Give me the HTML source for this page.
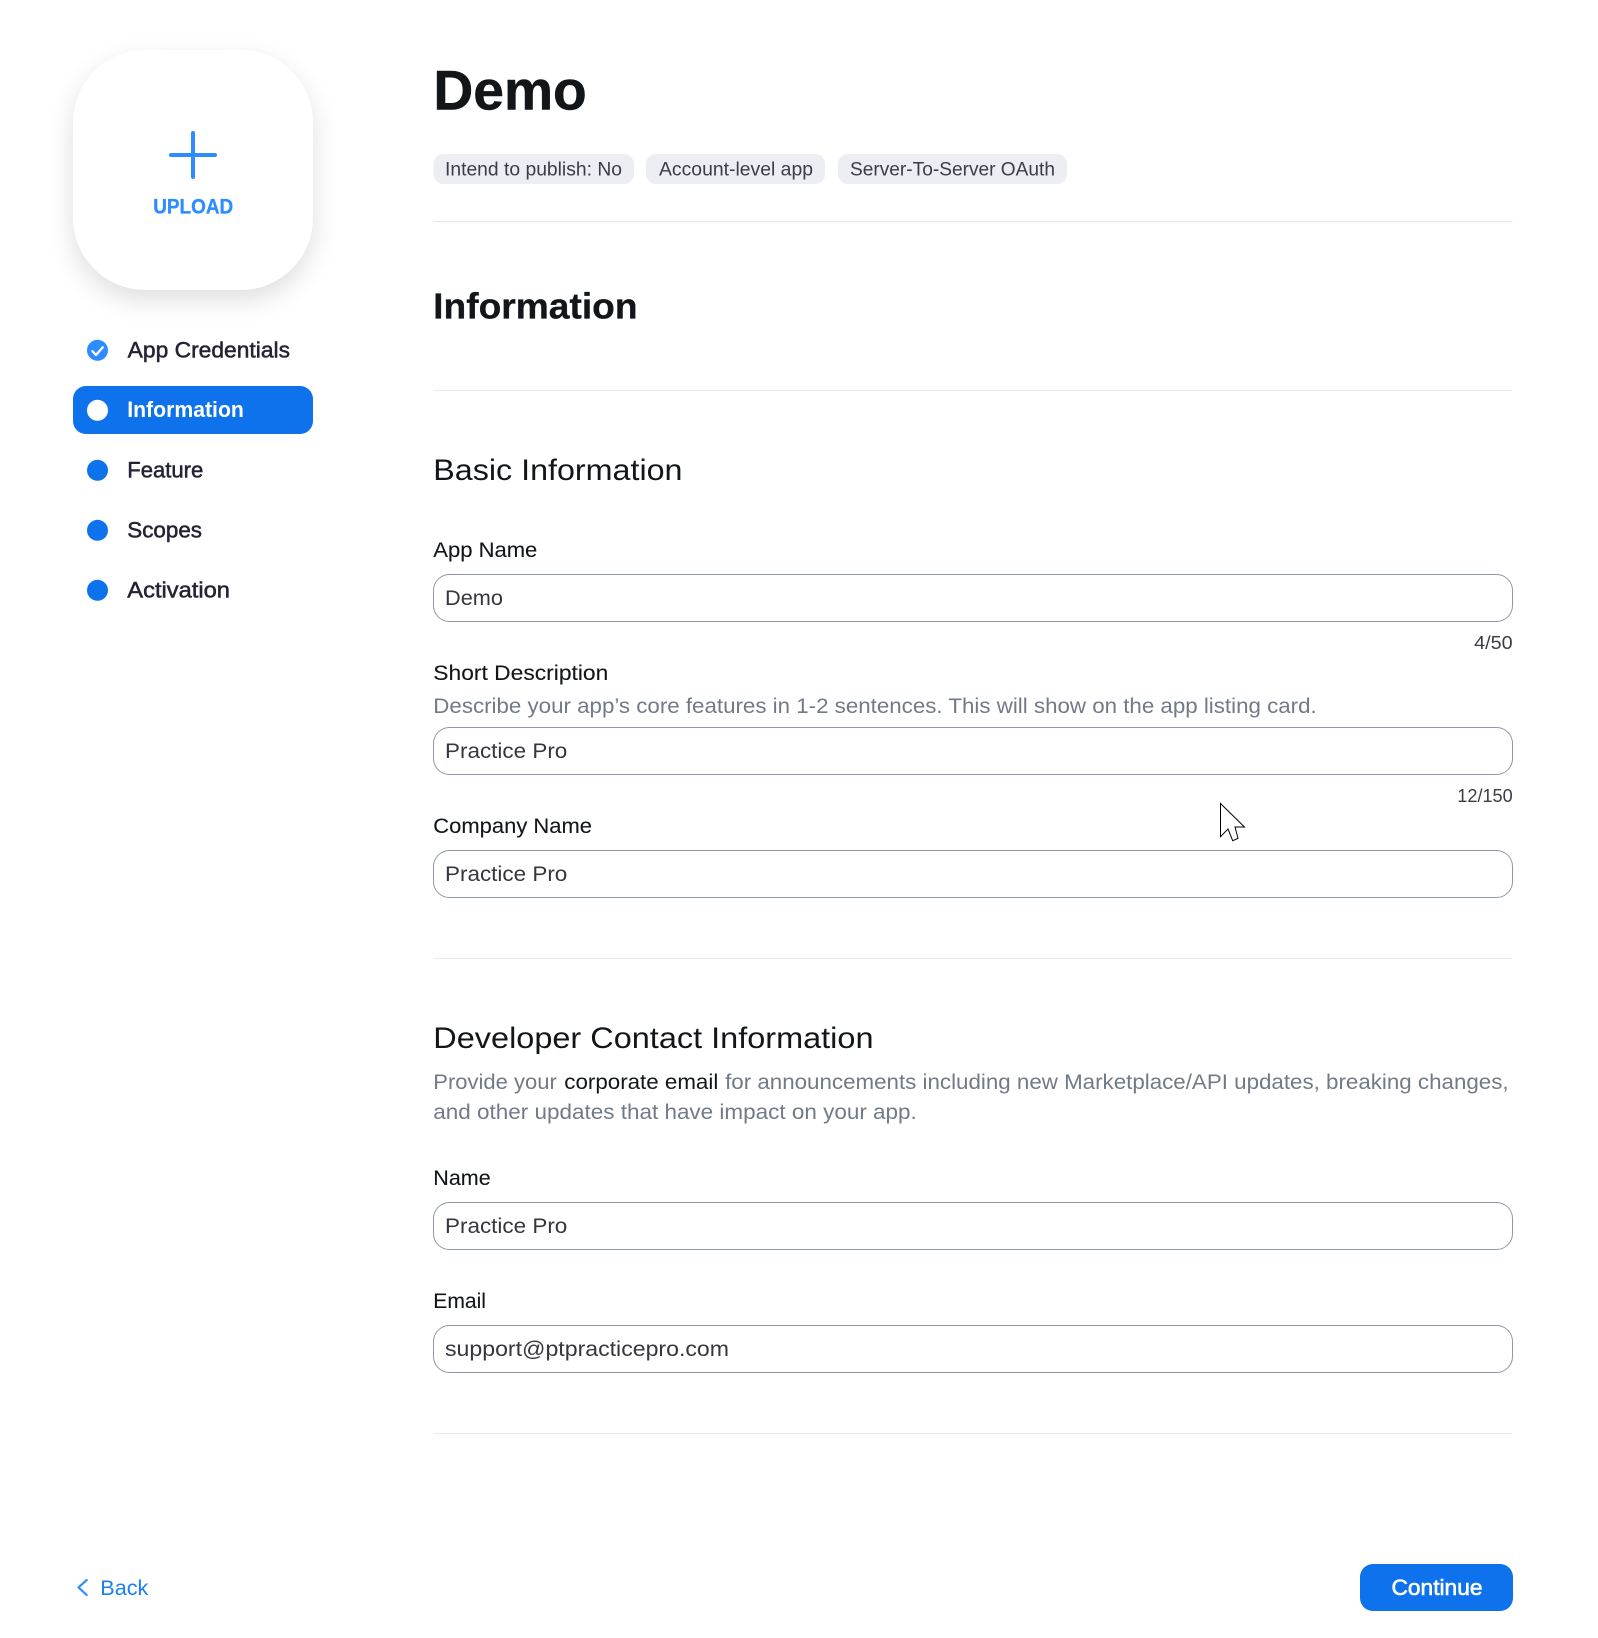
<!DOCTYPE html>
<html lang="en">
<head>
<meta charset="utf-8">
<title>Demo</title>
<style>
html,body{margin:0;padding:0;background:#fff;width:1598px;height:1638px;overflow:hidden}
.card{position:absolute;left:73px;top:50px;width:240px;height:240px;border-radius:72px;background:#fff;box-shadow:0 10px 26px rgba(0,0,0,.13)}
svg{position:absolute;left:0;top:0}
text{font-family:"Liberation Sans",Arial,sans-serif;white-space:pre}
.nav{font-size:22px;fill:#232333;stroke:#232333;stroke-width:.5px}
.lab{font-size:21.5px;fill:#131619;stroke:#131619;stroke-width:.1px}
.val{font-size:21.5px;fill:#36363f}
.sub{font-size:21.5px;fill:#727a88}
.bad{font-size:19px;fill:#3c3c46}
.cnt{font-size:18.5px;fill:#3c3c46}
.h3{font-size:30px;fill:#131619}
.inp{fill:#fff;stroke:#8f98a6;stroke-width:1}
.div{fill:#e9e9ec}
</style>
</head>
<body>
<div class="card"></div>
<svg width="1598" height="1638" viewBox="0 0 1598 1638" xmlns="http://www.w3.org/2000/svg">
  <!-- upload -->
  <path d="M193 133V177M171 155H215" stroke="#2d8cff" stroke-width="4" stroke-linecap="round" fill="none"/>
  <text x="153.2" y="213.7" font-size="21" font-weight="700" fill="#2d8cff" stroke="#2d8cff" stroke-width=".3" textLength="80" lengthAdjust="spacingAndGlyphs">UPLOAD</text>

  <!-- nav -->
  <circle cx="97.5" cy="350.3" r="10.5" fill="#2d8cff"/>
  <path d="M92.4 351.2l3.6 3.8 6.8-7.8" stroke="#fff" stroke-width="2.3" fill="none" stroke-linecap="round" stroke-linejoin="round"/>
  <text class="nav" x="127.7" y="357.4" textLength="162.3" lengthAdjust="spacingAndGlyphs">App Credentials</text>

  <rect x="73" y="386" width="240" height="48" rx="13" fill="#0e72ed"/>
  <circle cx="97.5" cy="410.3" r="10.5" fill="#fff"/>
  <text x="127.2" y="417.2" font-size="22" font-weight="700" fill="#fff" textLength="116.7" lengthAdjust="spacingAndGlyphs">Information</text>

  <circle cx="97.5" cy="470.3" r="10.5" fill="#0e72ed"/>
  <text class="nav" x="127.3" y="477.4" textLength="76" lengthAdjust="spacingAndGlyphs">Feature</text>
  <circle cx="97.5" cy="530.3" r="10.5" fill="#0e72ed"/>
  <text class="nav" x="127.3" y="537.4" textLength="74.7" lengthAdjust="spacingAndGlyphs">Scopes</text>
  <circle cx="97.5" cy="590.3" r="10.5" fill="#0e72ed"/>
  <text class="nav" x="127.3" y="597.4" textLength="102.7" lengthAdjust="spacingAndGlyphs">Activation</text>

  <!-- header -->
  <text x="433.4" y="109.6" font-size="56" font-weight="700" fill="#131619" stroke="#131619" stroke-width=".5" textLength="153.4" lengthAdjust="spacingAndGlyphs">Demo</text>

  <rect x="433.5" y="154" width="200.5" height="30" rx="10" fill="#ededf4"/>
  <text class="bad" x="445" y="175.3" textLength="177" lengthAdjust="spacingAndGlyphs">Intend to publish: No</text>
  <rect x="646" y="154" width="179" height="30" rx="10" fill="#ededf4"/>
  <text class="bad" x="659" y="175.3" textLength="154" lengthAdjust="spacingAndGlyphs">Account-level app</text>
  <rect x="838" y="154" width="229" height="30" rx="10" fill="#ededf4"/>
  <text class="bad" x="850" y="175.3" textLength="205" lengthAdjust="spacingAndGlyphs">Server-To-Server OAuth</text>

  <rect class="div" x="433.5" y="221" width="1079" height="1.2"/>

  <text x="433.2" y="318.3" font-size="36" font-weight="700" fill="#131619" stroke="#131619" stroke-width=".3" textLength="204.4" lengthAdjust="spacingAndGlyphs">Information</text>
  <rect class="div" x="433.5" y="390" width="1079" height="1"/>

  <!-- basic info -->
  <text class="h3" x="433.3" y="480" textLength="249.2" lengthAdjust="spacingAndGlyphs">Basic Information</text>

  <text class="lab" x="433.3" y="557.2" textLength="104" lengthAdjust="spacingAndGlyphs">App Name</text>
  <rect class="inp" x="433.5" y="574.5" width="1079" height="47" rx="16"/>
  <text class="val" x="445" y="605" textLength="58" lengthAdjust="spacingAndGlyphs">Demo</text>
  <text class="cnt" x="1474.2" y="649" textLength="38.5" lengthAdjust="spacingAndGlyphs">4/50</text>

  <text class="lab" x="433.3" y="680" textLength="175" lengthAdjust="spacingAndGlyphs">Short Description</text>
  <text class="sub" x="433.3" y="713" textLength="883.4" lengthAdjust="spacingAndGlyphs">Describe your app’s core features in 1-2 sentences. This will show on the app listing card.</text>
  <rect class="inp" x="433.5" y="727.5" width="1079" height="47" rx="16"/>
  <text class="val" x="445" y="758" textLength="122.3" lengthAdjust="spacingAndGlyphs">Practice Pro</text>
  <text class="cnt" x="1457.3" y="802" textLength="55.4" lengthAdjust="spacingAndGlyphs">12/150</text>

  <text class="lab" x="433.3" y="833" textLength="158.7" lengthAdjust="spacingAndGlyphs">Company Name</text>
  <rect class="inp" x="433.5" y="850.5" width="1079" height="47" rx="16"/>
  <text class="val" x="445" y="881" textLength="122.3" lengthAdjust="spacingAndGlyphs">Practice Pro</text>

  <rect class="div" x="433.5" y="958" width="1079" height="1"/>

  <!-- developer contact -->
  <text class="h3" x="433.3" y="1047.8" textLength="440.2" lengthAdjust="spacingAndGlyphs">Developer Contact Information</text>
  <text class="sub" x="433.3" y="1089" textLength="123.5" lengthAdjust="spacingAndGlyphs">Provide your</text>
  <text x="564.3" y="1089" font-size="21.5" fill="#131619" textLength="154" lengthAdjust="spacingAndGlyphs">corporate email</text>
  <text class="sub" x="725.1" y="1089" textLength="783.5" lengthAdjust="spacingAndGlyphs">for announcements including new Marketplace/API updates, breaking changes,</text>
  <text class="sub" x="433.3" y="1119" textLength="483.5" lengthAdjust="spacingAndGlyphs">and other updates that have impact on your app.</text>

  <text class="lab" x="433.3" y="1185" textLength="57.4" lengthAdjust="spacingAndGlyphs">Name</text>
  <rect class="inp" x="433.5" y="1202.5" width="1079" height="47" rx="16"/>
  <text class="val" x="445" y="1233" textLength="122.3" lengthAdjust="spacingAndGlyphs">Practice Pro</text>

  <text class="lab" x="433.3" y="1308" textLength="52.7" lengthAdjust="spacingAndGlyphs">Email</text>
  <rect class="inp" x="433.5" y="1325.5" width="1079" height="47" rx="16"/>
  <text class="val" x="445" y="1356" textLength="284" lengthAdjust="spacingAndGlyphs">support@ptpracticepro.com</text>

  <rect class="div" x="433.5" y="1433" width="1079" height="1"/>

  <!-- cursor -->
  <path d="M1220.5 803.5L1244.5 827H1235L1238 838.3L1232.7 840.7L1228 829L1220.5 836.7Z" fill="#fff" stroke="#000" stroke-width="1" stroke-linejoin="miter"/>

  <!-- footer -->
  <path d="M86.7 1580L78.5 1587.4L86.7 1595" stroke="#2d8cff" stroke-width="2.2" fill="none" stroke-linecap="round" stroke-linejoin="round"/>
  <text x="100.3" y="1595" font-size="21.5" fill="#1a7ff0" textLength="48" lengthAdjust="spacingAndGlyphs">Back</text>

  <rect x="1360" y="1564" width="153" height="47" rx="13" fill="#0e72ed"/>
  <text x="1391.5" y="1595" font-size="22" fill="#fff" stroke="#fff" stroke-width=".6" textLength="91" lengthAdjust="spacingAndGlyphs">Continue</text>
</svg>
</body>
</html>
